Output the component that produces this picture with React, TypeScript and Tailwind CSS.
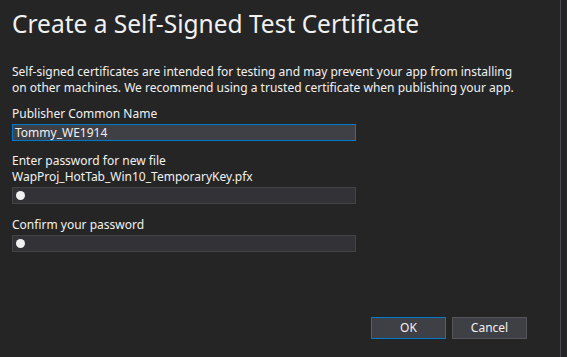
const font = { fontFamily: '"Noto Sans", "Open Sans", sans-serif' };

function PasswordBox() {
  return (
    <div className="w-[344px] h-[17px] bg-[#333337] border border-[#434346] flex items-center pl-[3px]">
      <div className="w-[9px] h-[9px] rounded-full bg-[#f1f1f1]" />
    </div>
  );
}

export default function App() {
  return (
    <div className="w-[567px] h-[357px] bg-[#252526] flex text-[#f1f1f1] overflow-hidden" style={font}>
      <div className="w-[560px] flex flex-col px-3">
        <h1 className="text-[24.5px] leading-[30px] mt-[9px] font-normal">
          Create a Self-Signed Test Certificate
        </h1>
        <p className="text-[12px] leading-[16px] mt-[25px]">
          Self-signed certificates are intended for testing and may prevent your app from installing
          <br />
          on other machines. We recommend using a trusted certificate when publishing your app.
        </p>
        <div className="text-[12px] leading-[16px] mt-[10px]">Publisher Common Name</div>
        <div className="w-[344px] h-[17px] bg-[#3f3f46] border border-[#007acc] flex items-center pl-[2px] text-[12px] mt-[2px]">
          Tommy_WE1914
        </div>
        <div className="text-[12px] leading-[16px] mt-[12px]">Enter password for new file</div>
        <div className="text-[12px] leading-[16px]">WapProj_HotTab_Win10_TemporaryKey.pfx</div>
        <div className="mt-[2px]">
          <PasswordBox />
        </div>
        <div className="text-[12px] leading-[16px] mt-[13px]">Confirm your password</div>
        <div className="mt-[2px]">
          <PasswordBox />
        </div>
        <div className="flex-1" />
        <div className="flex justify-end gap-[6px] pr-[21px] mb-[18px]">
          <button className="w-[75px] h-[22px] bg-[#3f3f46] border border-[#007acc] text-[12px]">OK</button>
          <button className="w-[75px] h-[22px] bg-[#3f3f46] border border-[#555558] text-[12px]">Cancel</button>
        </div>
      </div>
      <div className="w-px bg-[#4a4a52]" />
      <div className="flex-1" />
    </div>
  );
}
